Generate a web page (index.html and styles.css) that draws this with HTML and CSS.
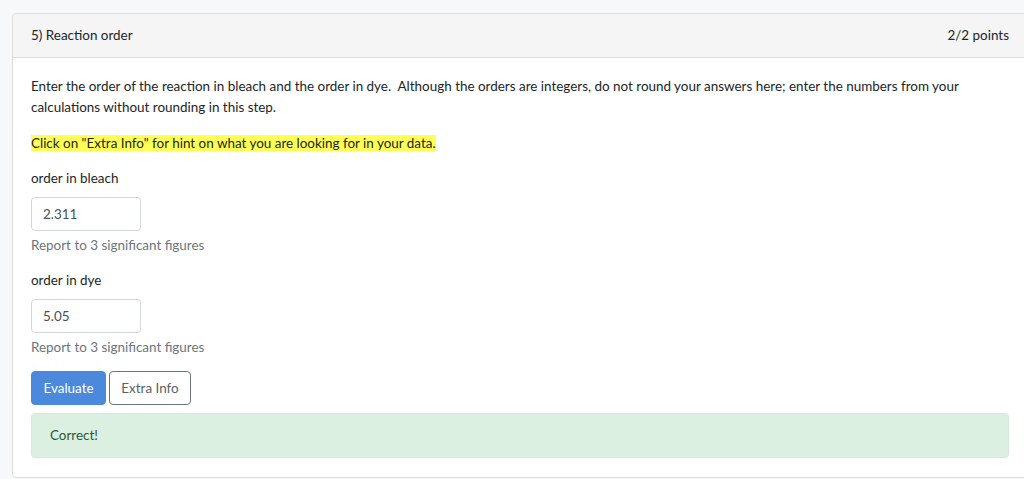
FILE: index.html
```html
<!DOCTYPE html>
<html>
<head>
<meta charset="utf-8">
<link rel="stylesheet" href="styles.css">
</head>
<body>
<div class="card">
  <div class="card-header">
    <span class="title">5) Reaction order</span>
    <span class="points">2/2 points</span>
  </div>
  <div class="card-body">
    <p class="prompt">Enter the order of the reaction in bleach and the order in dye.&nbsp; Although the orders are integers, do not round your answers here; enter the numbers from your calculations without rounding in this step.</p>
    <p class="hint"><span class="mark">Click on "Extra Info" for hint on what you are looking for in your data.</span></p>
    <div class="field">
      <label class="label">order in bleach</label>
      <div class="input">2.311</div>
      <div class="help">Report to 3 significant figures</div>
    </div>
    <div class="field">
      <label class="label">order in dye</label>
      <div class="input">5.05</div>
      <div class="help">Report to 3 significant figures</div>
    </div>
    <div class="actions">
      <button class="btn btn-primary">Evaluate</button>
      <button class="btn btn-outline">Extra Info</button>
    </div>
    <div class="alert">Correct!</div>
  </div>
</div>
</body>
</html>
```

FILE: styles.css
```css
html, body {
  margin: 0;
  padding: 0;
  overflow: hidden;
}
body {
  background: #f7f8fa;
  padding: 13px 0 0 12px;
  font-family: "Lato", "Noto Sans", sans-serif;
  font-size: 13.45px;
  line-height: 21px;
  color: #212529;
}
.card {
  width: 1014px;
  background: #fff;
  border: 1px solid #dcdcdc;
  border-radius: 4px;
}
.card-header {
  display: flex;
  justify-content: space-between;
  align-items: center;
  height: 43px;
  padding: 0 18px;
  background: #f5f5f5;
  border-bottom: 1px solid #dcdcdc;
  border-radius: 4px 4px 0 0;
}
.card-body {
  padding: 18px 18px 19px 18px;
}
.prompt {
  margin: 0 0 15px 0;
}
.hint {
  margin: 0 0 14px 0;
}
.mark {
  background: #ffff55;
}
.field {
  margin-bottom: 14px;
}
.field + .field {
  margin-bottom: 13px;
}
.label {
  display: block;
  margin-bottom: 8px;
}
.input {
  box-sizing: border-box;
  width: 110px;
  height: 34px;
  border: 1px solid #d3d6da;
  border-radius: 4px;
  padding: 0 11px;
  line-height: 32px;
  color: #495057;
}
.help {
  margin-top: 4px;
  color: #6c757d;
}
.actions {
  display: flex;
  gap: 3px;
  margin-bottom: 8px;
}
.btn {
  box-sizing: border-box;
  height: 34px;
  padding: 0 11px;
  font-family: inherit;
  font-size: 13.45px;
  border-radius: 4px;
  cursor: pointer;
}
.btn-primary {
  width: 75px;
  background: #4a89dc;
  border: 1px solid #4a89dc;
  color: #fff;
}
.btn-outline {
  width: 82px;
  background: #fff;
  border: 1px solid #6c757d;
  color: #5a6168;
}
.alert {
  box-sizing: border-box;
  height: 45px;
  padding: 0 18px;
  line-height: 43px;
  background: #dcf0e2;
  border: 1px solid #d2eadb;
  border-radius: 4px;
  color: #2b5733;
}
```
